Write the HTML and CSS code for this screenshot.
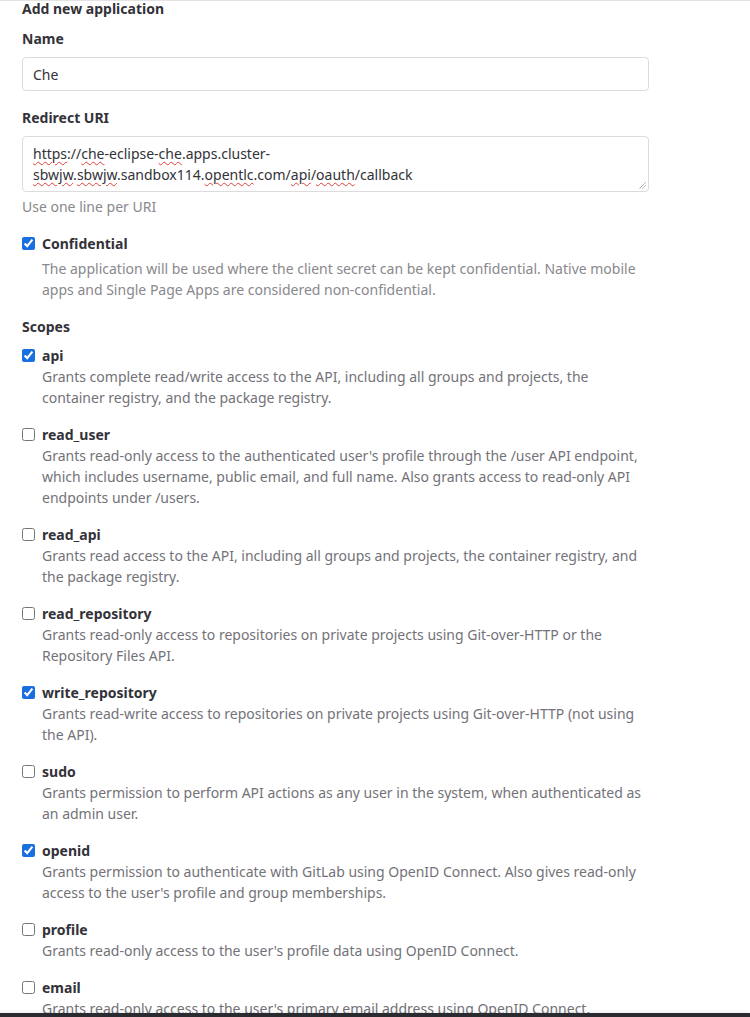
FILE: index.html
```html
<!DOCTYPE html>
<html lang="en">
<head>
<meta charset="utf-8">
<title>Add new application</title>
<link rel="stylesheet" href="styles.css">
</head>
<body>
<div class="page">
  <h4 class="title">Add new application</h4>

  <div class="form-group">
    <label class="label" for="name">Name</label>
    <input class="input" id="name" type="text" value="Che">
  </div>

  <div class="form-group">
    <label class="label">Redirect URI</label>
    <div class="textarea">
      <span class="sp">https</span>://<span class="sp">che</span>-eclipse-<span class="sp">che</span>.apps.cluster-<br><span class="sp">sbwjw</span>.<span class="sp">sbwjw</span>.sandbox114.<span class="sp">opentlc</span>.com/<span class="sp">api</span>/<span class="sp">oauth</span>/callback
      <svg class="grip" width="7" height="7" viewBox="0 0 7 7"><path d="M6.5 0.5 L0.5 6.5 M6.5 3.5 L3.5 6.5" stroke="#555" stroke-width="0.8" stroke-dasharray="1 0.6" fill="none"/></svg>
    </div>
    <p class="help">Use one line per URI</p>
  </div>

  <div class="form-group">
    <div class="check">
      <input type="checkbox" checked>
      <label>Confidential</label>
    </div>
    <p class="help conf-help">The application will be used where the client secret can be kept confidential. Native mobile apps and Single Page Apps are considered non-confidential.</p>
  </div>

  <div class="scopes">
    <label class="label scopes-label">Scopes</label>

    <div class="scope">
      <div class="check"><input type="checkbox" checked><label>api</label></div>
      <p class="desc">Grants complete read/write access to the API, including all groups and projects, the container registry, and the package registry.</p>
    </div>
    <div class="scope">
      <div class="check"><input type="checkbox"><label>read_user</label></div>
      <p class="desc">Grants read-only access to the authenticated user's profile through the /user API endpoint, which includes username, public email, and full name. Also grants access to read-only API endpoints under /users.</p>
    </div>
    <div class="scope">
      <div class="check"><input type="checkbox"><label>read_api</label></div>
      <p class="desc">Grants read access to the API, including all groups and projects, the container registry, and the package registry.</p>
    </div>
    <div class="scope">
      <div class="check"><input type="checkbox"><label>read_repository</label></div>
      <p class="desc">Grants read-only access to repositories on private projects using Git-over-HTTP or the Repository Files API.</p>
    </div>
    <div class="scope">
      <div class="check"><input type="checkbox" checked><label>write_repository</label></div>
      <p class="desc">Grants read-write access to repositories on private projects using Git-over-HTTP (not using the API).</p>
    </div>
    <div class="scope">
      <div class="check"><input type="checkbox"><label>sudo</label></div>
      <p class="desc">Grants permission to perform API actions as any user in the system, when authenticated as an admin user.</p>
    </div>
    <div class="scope">
      <div class="check"><input type="checkbox" checked><label>openid</label></div>
      <p class="desc">Grants permission to authenticate with GitLab using OpenID Connect. Also gives read-only access to the user's profile and group memberships.</p>
    </div>
    <div class="scope">
      <div class="check"><input type="checkbox"><label>profile</label></div>
      <p class="desc">Grants read-only access to the user's profile data using OpenID Connect.</p>
    </div>
    <div class="scope">
      <div class="check"><input type="checkbox"><label>email</label></div>
      <p class="desc">Grants read-only access to the user's primary email address using OpenID Connect.</p>
    </div>
  </div>
</div>
<div class="bottom-bar"></div>
</body>
</html>
```
FILE: styles.css
```css
html, body {
  margin: 0;
  padding: 0;
  background: #ffffff;
}

body {
  font-family: "Noto Sans", "Open Sans", sans-serif;
  font-size: 14px;
  line-height: 21px;
  color: #333238;
  box-shadow: inset 0 1px 0 #e3e3e3;
}

.page {
  width: 627px;
  padding: 0 0 40px 22px;
}

.title {
  margin: -2px 0 9px;
  font-size: 14px;
  font-weight: 700;
  line-height: 21px;
}

.form-group {
  margin-bottom: 16px;
}

.label {
  display: block;
  font-weight: 700;
  margin-bottom: 8px;
}

.input {
  display: block;
  box-sizing: border-box;
  width: 627px;
  height: 34px;
  margin: 0;
  padding: 0 10px;
  border: 1px solid #dcdcde;
  border-radius: 4px;
  font-family: inherit;
  font-size: 14px;
  color: #333238;
  outline: none;
}

.textarea {
  position: relative;
  box-sizing: border-box;
  width: 627px;
  height: 56px;
  padding: 6px 10px;
  border: 1px solid #dcdcde;
  border-radius: 4px;
  color: #333238;
}

.sp {
  text-decoration: underline wavy #e0403a;
  text-decoration-thickness: 1px;
  text-underline-offset: 2px;
}

.grip {
  position: absolute;
  right: 2px;
  bottom: 2px;
}

.help {
  margin: 4px 0 0;
  color: #89888d;
}

.conf-help {
  padding-left: 20px;
  color: #89888d;
}

.check {
  display: flex;
  align-items: center;
  gap: 7px;
  font-weight: 700;
}

.check input {
  margin: 0;
  width: 13px;
  height: 13px;
  accent-color: #1a6fdf;
}

.scopes-label {
  margin-bottom: 8px;
}

.scope {
  margin-bottom: 16px;
}

.desc {
  margin: 0;
  padding-left: 20px;
  color: #737278;
}

.bottom-bar {
  position: fixed;
  left: 0;
  right: 0;
  bottom: 0;
  height: 4px;
  background: #2a2b30;
  box-shadow: 0 -2px 3px rgba(0, 0, 0, 0.06);
}
```
